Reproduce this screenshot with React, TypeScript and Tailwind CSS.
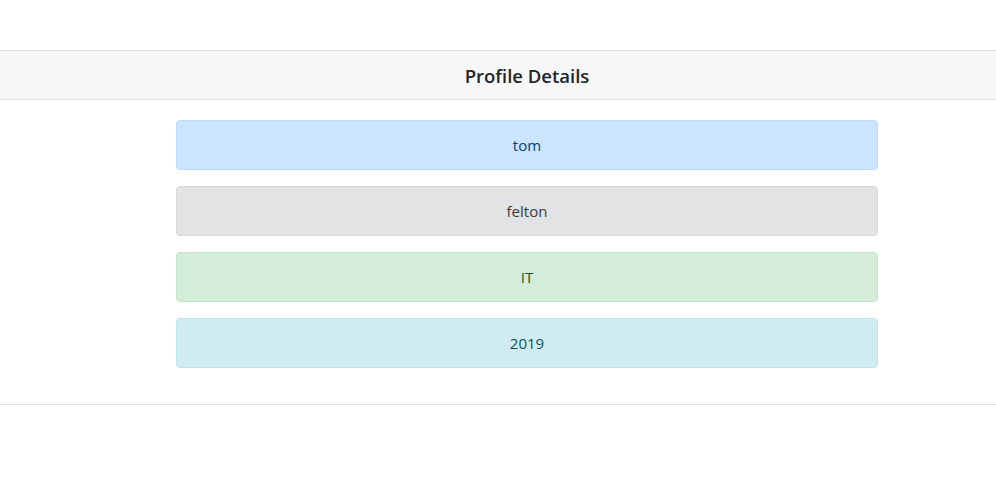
const ROWS = [
  { value: "tom", cls: "bg-[#cce5ff] border-[#b8daff] text-[#004085]" },
  { value: "felton", cls: "bg-[#e2e3e5] border-[#d6d8db] text-[#383d41]" },
  { value: "IT", cls: "bg-[#d4edda] border-[#c3e6cb] text-[#155724]" },
  { value: "2019", cls: "bg-[#d1ecf1] border-[#bee5eb] text-[#0c5460]" },
];

export default function App() {
  return (
    <div className="min-h-screen bg-white overflow-hidden text-[#212529] font-['Open_Sans',sans-serif]">
      <div className="w-[1054px] mt-[50px] border-y border-[#dfdfdf]">
        <div className="bg-[#f7f7f7] border-b border-[#dfdfdf] px-5 pt-[13px] pb-[11px] text-center">
          <h5 className="text-[18.5px] font-semibold leading-6">Profile Details</h5>
        </div>
        <div className="p-5">
          <div className="w-[702px] mx-auto flex flex-col gap-4 pb-4">
            {ROWS.map((r) => (
              <div
                key={r.value}
                className={`border rounded px-5 py-3 text-center text-[15px] leading-6 ${r.cls}`}
              >
                {r.value}
              </div>
            ))}
          </div>
        </div>
      </div>
    </div>
  );
}
